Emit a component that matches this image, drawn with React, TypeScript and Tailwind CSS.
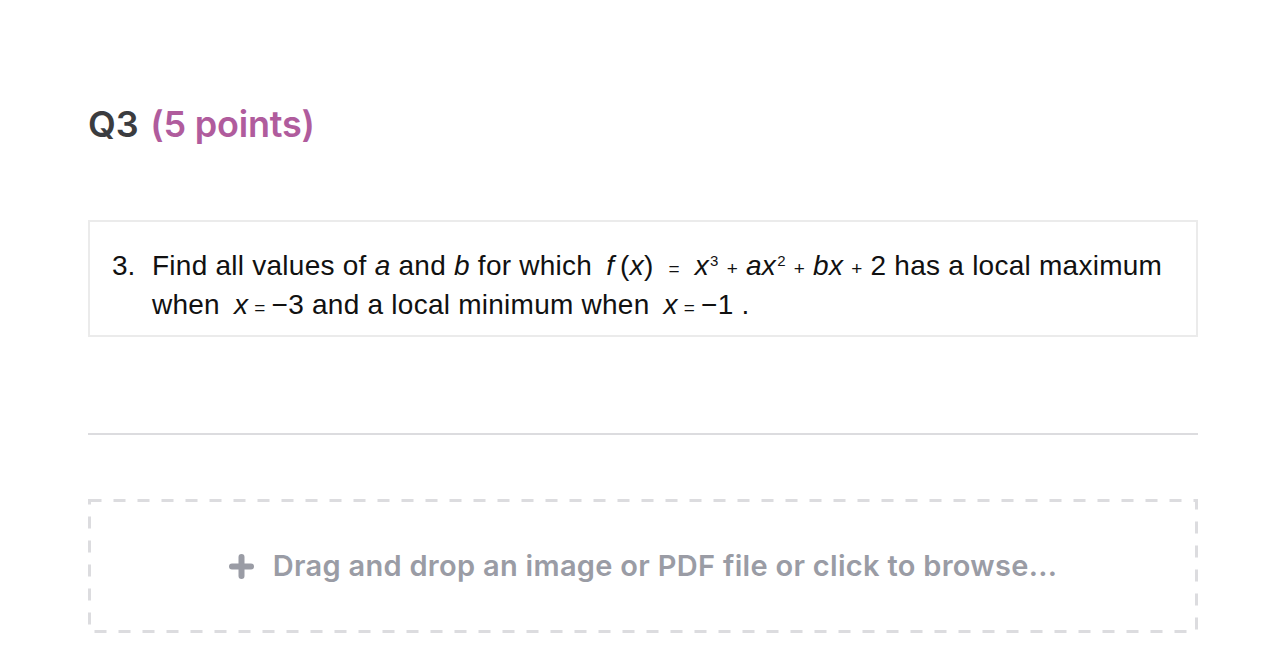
import React from 'react';

function Var({ children }: { children: React.ReactNode }) {
  return <i className="italic">{children}</i>;
}

function Sup({ children }: { children: React.ReactNode }) {
  return <sup className="relative top-[1px] ml-[1px] text-[15px] align-super">{children}</sup>;
}

function Op({ children, cls }: { children: React.ReactNode; cls: string }) {
  return <span className={`inline-block text-center text-[19px] ${cls}`}>{children}</span>;
}

function Problem() {
  return (
    <div className="flex border-2 border-[#ebebeb] px-[22px] pt-[26px] pb-[9px] font-['Liberation_Sans',Arial,sans-serif] text-[28px] leading-[36px] text-[#111]">
      <span className="w-[40px] shrink-0">3.</span>
      <p className="tracking-[0.25px]">
        Find all values of <Var>a</Var> and <Var>b</Var> for which{' '}
        <span className="ml-[6px]">
          <Var>f</Var>&thinsp;(<Var>x</Var>)
        </span>
        <Op cls="mx-[15px]">=</Op>
        <Var>x</Var>
        <Sup>3</Sup>
        <Op cls="mx-[8px]">+</Op>
        <Var>ax</Var>
        <Sup>2</Sup>
        <Op cls="mx-[8px]">+</Op>
        <Var>bx</Var>
        <Op cls="mx-[8px]">+</Op>2 has a local maximum
        <br />
        when
        <span className="ml-[14px]">
          <Var>x</Var>
        </span>
        <Op cls="mx-[6px]">=</Op>&minus;3 and a local minimum when
        <span className="ml-[14px]">
          <Var>x</Var>
        </span>
        <Op cls="mx-[6px]">=</Op>&minus;1 .
      </p>
    </div>
  );
}

function UploadBox() {
  return (
    <button
      type="button"
      className="relative flex h-[134px] w-full items-center justify-center gap-[19px] bg-white text-[#9a9ca5]"
    >
      <svg className="pointer-events-none absolute inset-0 h-full w-full" aria-hidden="true">
        <rect
          x="1.5"
          y="1.5"
          width="calc(100% - 3px)"
          height="calc(100% - 3px)"
          fill="none"
          stroke="#dcdcdf"
          strokeWidth="3"
          strokeDasharray="12 12"
        />
      </svg>
      <svg width="25" height="25" viewBox="0 0 25 25" aria-hidden="true">
        <path d="M12.5 3v19M3 12.5h19" stroke="currentColor" strokeWidth="6" strokeLinecap="round" />
      </svg>
      <span className="text-[29px] font-semibold tracking-[0.3px]">
        Drag and drop an image or PDF file or click to browse...
      </span>
    </button>
  );
}

export default function App() {
  return (
    <div className="min-h-screen bg-white font-['Inter','Open_Sans',sans-serif]">
      <div className="ml-[88px] w-[1110px] pt-[100px]">
        <h2 className="text-[36px] font-semibold leading-[48px] tracking-[-0.2px] text-[#3b3c3f]">
          Q3 <span className="ml-[3px] text-[#b05c9d]">(5 points)</span>
        </h2>

        <div className="mt-[72px]">
          <Problem />
        </div>

        <hr className="mt-[96px] border-t-2 border-[#dcdcdf]" />

        <div className="mt-[64px]">
          <UploadBox />
        </div>
      </div>
    </div>
  );
}
